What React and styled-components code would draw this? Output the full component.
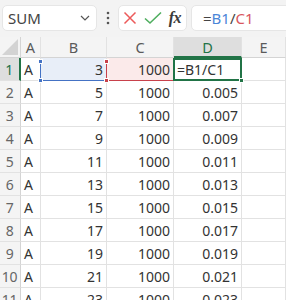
import React from "react";
import styled, { createGlobalStyle, css } from "styled-components";

const GlobalStyle = createGlobalStyle`
  html, body { margin: 0; padding: 0; background: #ffffff; overflow: hidden; }
  body { font-family: "Noto Sans", "Liberation Sans", sans-serif; }
  * { box-sizing: border-box; }
`;

const Page = styled.div`
  width: 286px;
  height: 300px;
  overflow: hidden;
  background: #ffffff;
`;

const Toolbar = styled.div`
  display: flex;
  align-items: center;
  height: 37px;
  padding: 0 0 1px 2px;
  background: #f3f3f3;
`;

const Box = styled.div`
  display: flex;
  align-items: center;
  height: 26px;
  background: #ffffff;
  border: 1px solid #e6e6e6;
  border-radius: 5px;
`;

const NameBox = styled(Box)`
  width: 95px;
  padding: 0 6px 0 5px;
  justify-content: space-between;
  font-size: 15px;
  color: #444444;
`;

const DotsWrap = styled.div`
  width: 21px;
  display: flex;
  justify-content: center;
`;

const ActionBox = styled(Box)`
  width: 69px;
  padding: 0 5px 0 4px;
  justify-content: space-between;
`;

const Fx = styled.span`
  font-family: "Liberation Serif", "DejaVu Serif", serif;
  font-style: italic;
  font-weight: bold;
  font-size: 16px;
  color: #3a3a3a;
  letter-spacing: -0.5px;
`;

const FormulaBox = styled(Box)`
  flex: 1;
  margin-left: 4px;
  margin-right: -8px;
  padding-left: 11px;
  font-size: 15px;
  color: #444444;
`;

const Ref = styled.span`
  color: ${(p) => p.$color};
`;

const Sheet = styled.div`
  display: grid;
  grid-template-columns: 21px 20px 66px 67px 68px 1fr;
  grid-auto-rows: 23px;
  grid-template-rows: 21px;
  font-size: 14px;
  color: #333333;
`;

const HeaderCell = styled.div`
  display: flex;
  align-items: center;
  justify-content: center;
  background: ${(p) => (p.$selected ? "#dedede" : "#f4f4f4")};
  color: ${(p) => (p.$selected ? "#217346" : "#5a5a5a")};
  border-right: 1px solid #e2e2e2;
  border-bottom: ${(p) => (p.$selected ? "2px solid #217346" : "1px solid #d4d4d4")};
  font-size: 14.5px;
`;

const Corner = styled.div`
  background: #f4f4f4;
  border-right: 1px solid #d4d4d4;
  border-bottom: 1px solid #d4d4d4;
  display: flex;
  align-items: flex-end;
  justify-content: flex-end;
  padding: 0 2px 2px 0;
`;

const RowHead = styled.div`
  display: flex;
  align-items: center;
  justify-content: center;
  padding-right: 1px;
  background: ${(p) => (p.$selected ? "#dedede" : "#f4f4f4")};
  color: ${(p) => (p.$selected ? "#217346" : "#666666")};
  border-bottom: 1px solid #e2e2e2;
  border-right: ${(p) => (p.$selected ? "2px solid #217346" : "1px solid #d4d4d4")};
  font-size: 14px;
  letter-spacing: -0.3px;
  white-space: nowrap;
`;

const Cell = styled.div`
  position: relative;
  display: flex;
  align-items: center;
  justify-content: ${(p) => (p.$right ? "flex-end" : "flex-start")};
  padding: 0 3px 0 3px;
  background: ${(p) => p.$bg || "#ffffff"};
  border-right: 1px solid #e2e2e2;
  border-bottom: 1px solid #e2e2e2;
  white-space: nowrap;
  overflow: visible;
  ${(p) =>
    p.$frame &&
    css`
      &::after {
        content: "";
        position: absolute;
        left: -1px;
        top: ${p.$frameTop}px;
        right: -1px;
        bottom: -1px;
        border: ${p.$frameWidth}px solid ${p.$frame};
        border-top-color: ${p.$hideTop ? "transparent" : p.$frame};
        pointer-events: none;
        z-index: 2;
      }
    `}
`;

const Handle = styled.span`
  position: absolute;
  width: 5px;
  height: 5px;
  background: ${(p) => p.$color};
  border: 1px solid #ffffff;
  z-index: 3;
  ${(p) => (p.$top ? "top: 1px;" : "bottom: -3px;")}
  ${(p) => (p.$leftSide ? "left: -3px;" : "right: -3px;")}
`;

const Triangle = () => (
  <svg width="16" height="16" viewBox="0 0 16 16">
    <polygon points="16,0 16,16 0,16" fill="#d3d3d3" />
  </svg>
);

const Chevron = () => (
  <svg width="10" height="6" viewBox="0 0 10 6">
    <path d="M1 1 L5 5 L9 1" fill="none" stroke="#555" strokeWidth="1.2" />
  </svg>
);

const Dots = () => (
  <svg width="4" height="14" viewBox="0 0 4 14">
    <circle cx="2" cy="2" r="1.3" fill="#555" />
    <circle cx="2" cy="7" r="1.3" fill="#555" />
    <circle cx="2" cy="12" r="1.3" fill="#555" />
  </svg>
);

const Cross = () => (
  <svg width="14" height="14" viewBox="0 0 14 14">
    <path d="M1.5 1.5 L12.5 12.5 M12.5 1.5 L1.5 12.5" stroke="#ec5a5a" strokeWidth="1.5" fill="none" />
  </svg>
);

const Check = () => (
  <svg width="18" height="14" viewBox="0 0 18 14">
    <path d="M1 7.5 L6 12 L17 1.5" stroke="#4fae5f" strokeWidth="1.6" fill="none" />
  </svg>
);

const BLUE = "#4472c4";
const RED = "#c8414b";
const GREEN = "#217346";

export default function App() {
  const rows = Array.from({ length: 11 }, (_, i) => i + 1);
  return (
    <Page>
      <GlobalStyle />
      <Toolbar>
        <NameBox>
          <span>SUM</span>
          <Chevron />
        </NameBox>
        <DotsWrap>
          <Dots />
        </DotsWrap>
        <ActionBox>
          <Cross />
          <Check />
          <Fx>fx</Fx>
        </ActionBox>
        <FormulaBox>
          =<Ref $color="#4a86d8">B1</Ref>/<Ref $color="#d8565e">C1</Ref>
        </FormulaBox>
      </Toolbar>
      <Sheet>
        <Corner>
          <Triangle />
        </Corner>
        <HeaderCell>A</HeaderCell>
        <HeaderCell>B</HeaderCell>
        <HeaderCell>C</HeaderCell>
        <HeaderCell $selected>D</HeaderCell>
        <HeaderCell>E</HeaderCell>
        {rows.map((r) => {
          const b = 2 * r + 1;
          const first = r === 1;
          return (
            <React.Fragment key={r}>
              <RowHead $selected={first}>{r}</RowHead>
              <Cell>A</Cell>
              <Cell
                $right
                $bg={first ? "#e8eef8" : undefined}
                $frame={first ? BLUE : undefined}
                $frameWidth={1}
                $frameTop={2}
                $hideTop
              >
                {b}
                {first && <Handle $color={BLUE} $leftSide />}
                {first && <Handle $color={BLUE} />}
                {first && <Handle $color={BLUE} $leftSide $top />}
              </Cell>
              <Cell
                $right
                $bg={first ? "#fbeaea" : undefined}
                $frame={first ? RED : undefined}
                $frameWidth={1}
                $frameTop={2}
                $hideTop
              >
                1000
                {first && <Handle $color={RED} $leftSide />}
                {first && <Handle $color={RED} $leftSide $top />}
              </Cell>
              <Cell
                $right={!first}
                $frame={first ? GREEN : undefined}
                $frameWidth={2}
                $frameTop={0}
              >
                {first ? "=B1/C1" : (b / 1000).toFixed(3)}
                {first && <Handle $color={GREEN} />}
              </Cell>
              <Cell />
            </React.Fragment>
          );
        })}
      </Sheet>
    </Page>
  );
}
